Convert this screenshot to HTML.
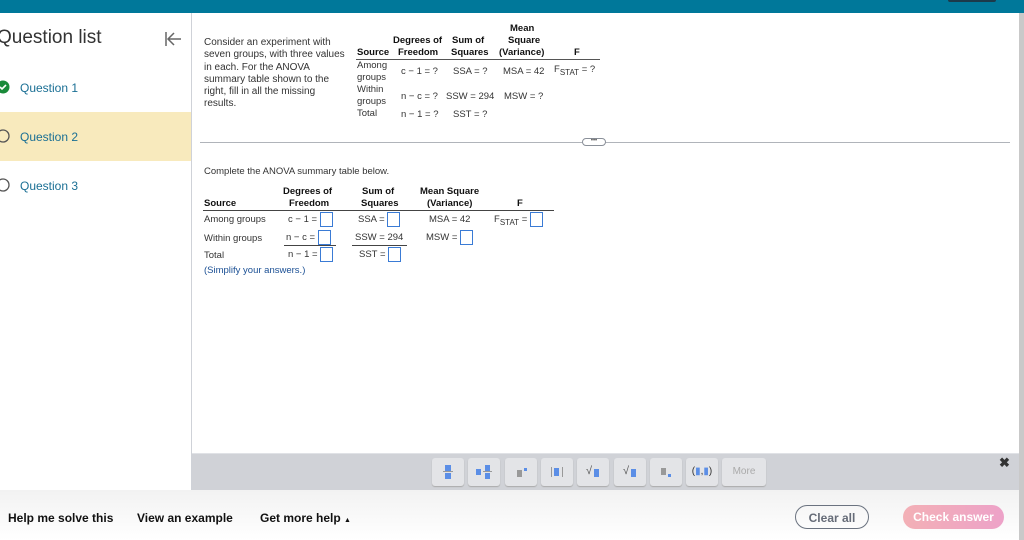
<!DOCTYPE html>
<html><head><meta charset="utf-8"><style>
*{margin:0;padding:0;box-sizing:border-box}
body{width:1024px;height:540px;overflow:hidden;background:#fff;font-family:"Liberation Sans",Arial,sans-serif;position:relative;color:#222}
.a{position:absolute;white-space:nowrap}
.s{font-size:9.5px;color:#333}
.b{font-weight:bold;color:#111}
.box{display:inline-block;width:13px;height:15px;border:1.5px solid #3a7bd5;vertical-align:middle;background:#fff}
.tb{position:absolute;top:458px;width:32px;height:28px;background:#e3e4e7;border-radius:3px;box-shadow:0 1px 1px #aaa}
.bl{position:absolute;background:#5b8ee6}
.gr{position:absolute;background:#999}
</style></head><body>
<div class="a" style="left:0;top:0;width:1024px;height:13px;background:#00789a"></div>
<div class="a" style="left:948px;top:0;width:48px;height:2px;background:#1c3a4a;border-radius:0 0 4px 4px"></div>
<div class="a" style="left:1019px;top:13px;width:5px;height:527px;background:#c9c9c9"></div>
<!-- sidebar -->
<div class="a" style="left:191px;top:13px;width:1px;height:477px;background:#cfd2d8"></div>
<div class="a" style="left:-3px;top:27px;font-size:19px;color:#333">Question list</div>
<svg class="a" style="left:164px;top:30px" width="20" height="18" viewBox="0 0 20 18"><path d="M2 2v14M17 9H5M10 3L4 9l6 6" stroke="#666" stroke-width="1.5" fill="none"/></svg>
<div class="a" style="left:0;top:112px;width:191px;height:49px;background:#f8eabd"></div>
<svg class="a" style="left:-4px;top:80px" width="14" height="14"><circle cx="7" cy="7" r="6.5" fill="#1a8a3a"/><path d="M4 7l2 2 4-4" stroke="#fff" stroke-width="1.6" fill="none"/></svg>
<div class="a" style="left:20px;top:81px;font-size:12px;color:#1a6f94">Question 1</div>
<svg class="a" style="left:-4px;top:129px" width="14" height="14"><circle cx="7" cy="7" r="6" fill="none" stroke="#555" stroke-width="1.3"/></svg>
<div class="a" style="left:20px;top:130px;font-size:12px;color:#1a6f94">Question 2</div>
<svg class="a" style="left:-4px;top:178px" width="14" height="14"><circle cx="7" cy="7" r="6" fill="none" stroke="#555" stroke-width="1.3"/></svg>
<div class="a" style="left:20px;top:179px;font-size:12px;color:#1a6f94">Question 3</div>
<!-- question -->
<div class="a" style="left:204px;top:37px;font-size:10px;color:#333;line-height:12.3px;white-space:normal;width:146px">Consider an experiment with seven groups, with three values in each. For the ANOVA summary table shown to the right, fill in all the missing results.</div>
<div class="a s b" style="left:510px;top:23px">Mean</div>
<div class="a s b" style="left:393px;top:35px">Degrees of</div>
<div class="a s b" style="left:452px;top:35px">Sum of</div>
<div class="a s b" style="left:508px;top:35px">Square</div>
<div class="a s b" style="left:357px;top:47px">Source</div>
<div class="a s b" style="left:398px;top:47px">Freedom</div>
<div class="a s b" style="left:451px;top:47px">Squares</div>
<div class="a s b" style="left:499px;top:47px">(Variance)</div>
<div class="a s b" style="left:574px;top:47px">F</div>
<div class="a" style="left:356px;top:59px;width:244px;height:1px;background:#555"></div>
<div class="a s" style="left:357px;top:60px;line-height:12px">Among<br>groups<br>Within<br>groups<br>Total</div>
<div class="a s" style="left:401px;top:66px">c − 1 = ?</div>
<div class="a s" style="left:453px;top:66px">SSA = ?</div>
<div class="a s" style="left:503px;top:66px">MSA = 42</div>
<div class="a s" style="left:554px;top:64px">F<sub style="font-size:8px">STAT</sub> = ?</div>
<div class="a s" style="left:401px;top:91px">n − c = ?</div>
<div class="a s" style="left:446px;top:91px">SSW = 294</div>
<div class="a s" style="left:504px;top:91px">MSW = ?</div>
<div class="a s" style="left:401px;top:109px">n − 1 = ?</div>
<div class="a s" style="left:453px;top:109px">SST = ?</div>
<div class="a" style="left:200px;top:142px;width:810px;height:1px;background:#b0b4ba"></div>
<div class="a" style="left:582px;top:138px;width:24px;height:8px;border:1px solid #8a9099;border-radius:5px;background:#fff;font-size:6px;line-height:5px;text-align:center;color:#555">•••</div>
<!-- answer -->
<div class="a s" style="left:204px;top:166px">Complete the ANOVA summary table below.</div>
<div class="a s b" style="left:283px;top:186px">Degrees of</div>
<div class="a s b" style="left:362px;top:186px">Sum of</div>
<div class="a s b" style="left:420px;top:186px">Mean Square</div>
<div class="a s b" style="left:204px;top:198px">Source</div>
<div class="a s b" style="left:289px;top:198px">Freedom</div>
<div class="a s b" style="left:361px;top:198px">Squares</div>
<div class="a s b" style="left:427px;top:198px">(Variance)</div>
<div class="a s b" style="left:517px;top:198px">F</div>
<div class="a" style="left:203px;top:210px;width:351px;height:1px;background:#444"></div>
<div class="a s" style="left:204px;top:214px">Among groups</div>
<div class="a s" style="left:288px;top:212px">c − 1 = <span class="box"></span></div>
<div class="a s" style="left:358px;top:212px">SSA = <span class="box"></span></div>
<div class="a s" style="left:429px;top:214px">MSA = 42</div>
<div class="a s" style="left:494px;top:212px">F<sub style="font-size:8px">STAT</sub> = <span class="box"></span></div>
<div class="a s" style="left:204px;top:233px">Within groups</div>
<div class="a s" style="left:286px;top:230px">n − c = <span class="box"></span></div>
<div class="a s" style="left:355px;top:232px">SSW = 294</div>
<div class="a s" style="left:426px;top:230px">MSW = <span class="box"></span></div>
<div class="a" style="left:284px;top:245px;width:52px;height:1px;background:#444"></div>
<div class="a" style="left:352px;top:245px;width:55px;height:1px;background:#444"></div>
<div class="a s" style="left:204px;top:250px">Total</div>
<div class="a s" style="left:288px;top:247px">n − 1 = <span class="box"></span></div>
<div class="a s" style="left:359px;top:247px">SST = <span class="box"></span></div>
<div class="a s" style="left:204px;top:265px;color:#1a4f94">(Simplify your answers.)</div>
<!-- toolbar -->
<div class="a" style="left:192px;top:453px;width:827px;height:37px;background:#d0d2d7;border-top:1px solid #e0e2e6"></div>
<div class="tb" style="left:432px"><div class="bl" style="left:13px;top:7px;width:6px;height:6px"></div><div class="gr" style="left:11px;top:13px;width:10px;height:1px"></div><div class="bl" style="left:13px;top:15px;width:6px;height:6px"></div></div>
<div class="tb" style="left:468px"><div class="bl" style="left:8px;top:11px;width:5px;height:6px"></div><div class="bl" style="left:17px;top:7px;width:5px;height:6px"></div><div class="gr" style="left:15px;top:13px;width:9px;height:1px"></div><div class="bl" style="left:17px;top:15px;width:5px;height:6px"></div></div>
<div class="tb" style="left:505px"><div class="gr" style="left:12px;top:12px;width:5px;height:7px"></div><div class="bl" style="left:19px;top:10px;width:3px;height:3px"></div></div>
<div class="tb" style="left:541px"><div class="gr" style="left:10px;top:9px;width:1px;height:10px"></div><div class="bl" style="left:13px;top:10px;width:5px;height:8px"></div><div class="gr" style="left:21px;top:9px;width:1px;height:10px"></div></div>
<div class="tb" style="left:577px;font-size:11px;color:#555;padding:7px 0 0 9px">√<div class="bl" style="left:17px;top:11px;width:5px;height:8px"></div></div>
<div class="tb" style="left:614px;font-size:11px;color:#555;padding:7px 0 0 9px">√<div class="bl" style="left:17px;top:11px;width:5px;height:8px"></div></div>
<div class="tb" style="left:650px"><div class="gr" style="left:11px;top:10px;width:5px;height:7px"></div><div class="bl" style="left:18px;top:16px;width:3px;height:3px"></div></div>
<div class="tb" style="left:686px;font-size:10px;color:#333;text-align:center;line-height:28px">(<span style="color:#5b8ee6">▮</span>,<span style="color:#5b8ee6">▮</span>)</div>
<div class="tb" style="left:722px;width:44px;font-size:10px;color:#aaa;text-align:center;line-height:28px">More</div>
<div class="a" style="left:999px;top:455px;font-size:13px;font-weight:bold;color:#333">✖</div>
<!-- footer -->
<div class="a" style="left:0;top:490px;width:1019px;height:50px;background:linear-gradient(#f2f2f2,#fff)"></div>
<div class="a" style="left:8px;top:511px;font-size:12px;font-weight:bold;color:#111">Help me solve this</div>
<div class="a" style="left:137px;top:511px;font-size:12px;font-weight:bold;color:#111">View an example</div>
<div class="a" style="left:260px;top:511px;font-size:12px;font-weight:bold;color:#111">Get more help <span style="font-size:7px">▲</span></div>
<div class="a" style="left:795px;top:505px;width:74px;height:24px;border:1.5px solid #6b7380;border-radius:12px;font-size:12px;font-weight:bold;color:#666c78;text-align:center;line-height:22px;padding-top:1px">Clear all</div>
<div class="a" style="left:903px;top:505px;width:101px;height:24px;border-radius:12px;background:linear-gradient(90deg,#f3b0b6,#eda2c8);font-size:12px;font-weight:bold;color:#fff;text-align:center;line-height:24px">Check answer</div>
</body></html>
